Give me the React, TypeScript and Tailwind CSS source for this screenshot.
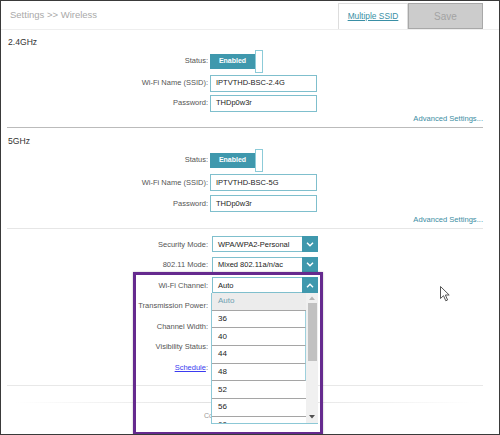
import React from "react";

const Chevron = ({ up = false }: { up?: boolean }) => (
  <svg width="8" height="5" viewBox="0 0 8 5" className="block">
    <polyline
      points={up ? "1,4.2 4,1.2 7,4.2" : "1,0.8 4,3.8 7,0.8"}
      fill="none"
      stroke="white"
      strokeWidth="1.4"
    />
  </svg>
);

const Label = ({ children }: { children: React.ReactNode }) => (
  <div className="w-[201px] shrink-0 text-right text-[7.5px] text-[#555] leading-none">{children}</div>
);

const Toggle = () => (
  <div className="flex items-center">
    <div className="w-[45px] h-[15px] bg-[#3f98ad] text-white text-[7px] font-bold flex items-center justify-center">
      Enabled
    </div>
    <div className="w-[8px] h-[23px] border border-[#8ccbd8] bg-white" />
  </div>
);

const TextInput = ({ value }: { value: string }) => (
  <div className="w-[107px] h-[17px] border border-[#7fbfcd] bg-white text-[7.5px] text-[#222] pl-[5px] flex items-center leading-none">
    {value}
  </div>
);

const Select = ({ value, up = false }: { value: string; up?: boolean }) => (
  <div className="flex w-[106px] h-[16px]">
    <div className="w-[90px] border border-r-0 border-[#7fbfcd] bg-white text-[7.5px] text-[#222] pl-[5px] flex items-center leading-none">
      {value}
    </div>
    <div className="w-[16px] bg-[#3f98ad] flex items-center justify-center">
      <Chevron up={up} />
    </div>
  </div>
);

const BandSection = ({
  title,
  ssid,
  rowH,
  lineClass,
  topClass,
}: {
  title: string;
  ssid: string;
  rowH: string;
  lineClass: string;
  topClass: string;
}) => (
  <section className={`ml-[6px] mr-[16px] border-b pb-[2px] ${lineClass}`}>
    <div className={`${topClass} h-[14px] leading-[14px] pl-[1px] text-[8.6px] text-[#333]`}>{title}</div>
    <div className="flex items-center gap-[2px] h-[24px]">
      <Label>Status:</Label>
      <Toggle />
    </div>
    <div className={`flex items-center gap-[2px] ${rowH}`}>
      <Label>Wi-Fi Name (SSID):</Label>
      <TextInput value={ssid} />
    </div>
    <div className={`flex items-center gap-[2px] ${rowH}`}>
      <Label>Password:</Label>
      <TextInput value="THDp0w3r" />
    </div>
    <div className="h-[12px] leading-[12px] text-right text-[7.6px] text-[#3d8ea3]">Advanced Settings...</div>
  </section>
);

const LowerRow = ({ label, children }: { label: React.ReactNode; children?: React.ReactNode }) => (
  <div className="flex items-center gap-[4px] h-[20.5px]">
    <Label>{label}</Label>
    {children}
  </div>
);

const options = ["Auto", "36", "40", "44", "48", "52", "56", "60"];

export default function App() {
  return (
    <div className="w-[500px] h-[435px] border border-[#3a3a3a] bg-white relative overflow-hidden font-['Liberation_Sans',Arial,sans-serif]">
      {/* header */}
      <header className="flex h-[29px] border-b border-[#eeeeee]">
        <div className="flex-1 pl-[9px] flex items-center text-[9.5px] text-[#a9a9a9]">Settings &gt;&gt; Wireless</div>
        <div className="flex pt-[2px] pr-[16px]">
          <div className="w-[70px] h-[26px] border border-b-0 border-[#dddddd] bg-white flex items-center justify-center text-[8.4px] text-[#3a8fa5] underline">
            Multiple SSID
          </div>
          <div className="w-[75px] h-[26px] bg-[#cccccc] border border-[#a8a8a8] flex items-center justify-center text-[10px] text-[#a3a3a3]">
            Save
          </div>
        </div>
      </header>

      <BandSection title="2.4GHz" ssid="IPTVTHD-BSC-2.4G" rowH="h-[20px]" lineClass="border-[#bbbbbb]" topClass="mt-[5px]" />
      <BandSection title="5GHz" ssid="IPTVTHD-BSC-5G" rowH="h-[21px]" lineClass="border-[#e6e6e6]" topClass="mt-[6px]" />

      <section className="ml-[6px] mr-[16px] pt-[5px]">
        <LowerRow label="Security Mode:">
          <Select value="WPA/WPA2-Personal" />
        </LowerRow>
        <LowerRow label="802.11 Mode:">
          <Select value="Mixed 802.11a/n/ac" />
        </LowerRow>
        <LowerRow label="Wi-Fi Channel:">
          <Select value="Auto" up />
        </LowerRow>
        <LowerRow label="Transmission Power:" />
        <LowerRow label="Channel Width:" />
        <LowerRow label="Visibility Status:" />
        <LowerRow
          label={
            <span>
              <span className="text-[#3b3bf0] underline">Schedule</span>:
            </span>
          }
        />
        <div className="mt-[7px] h-px bg-[#e8e8e8]" />
        <div className="mt-[16px] mx-[8px] h-px bg-gradient-to-r from-transparent via-[#dddddd] to-transparent" />
        <div className="mt-[9px] pl-[197px] text-[7px] text-[#999] leading-none">Copyright © D-Link Corporation.</div>
      </section>

      {/* open dropdown list */}
      <div className="absolute left-[210px] top-[292px] w-[107px] h-[131px] flex border-l border-b border-[#8cc8d6] bg-white">
        <div className="flex-1 flex flex-col overflow-hidden">
          {options.map((o, i) => (
            <div
              key={o}
              className={`shrink-0 h-[17.7px] flex items-center pl-[6px] text-[8px] leading-none border-b border-[#a5a5a5] ${
                i === 0 ? "bg-[#ececec] text-[#6ea1b1]" : "text-[#222]"
              } ${i >= 1 && i <= 4 ? "border-r-[1.5px] border-r-[#9dd0dc]" : ""}`}
            >
              {o}
            </div>
          ))}
        </div>
        <div className="w-[12px] bg-[#f0f0f0] flex flex-col">
          <div className="h-[10px] flex items-center justify-center">
            <svg width="6" height="4" viewBox="0 0 6 4">
              <polygon points="0,4 3,0.5 6,4" fill="#b5b5b5" />
            </svg>
          </div>
          <div className="mx-[1.5px] h-[58px] bg-[#c1c1c1]" />
          <div className="flex-1" />
          <div className="h-[13px] flex items-center justify-center">
            <svg width="6" height="4" viewBox="0 0 6 4">
              <polygon points="0,0 6,0 3,3.5" fill="#505050" />
            </svg>
          </div>
        </div>
      </div>

      {/* purple highlight annotation */}
      <div className="absolute left-[132px] top-[271px] w-[190px] h-[163px] border-[3px] border-[#652a8e] shadow-[0_0_2px_rgba(0,0,0,0.25)] pointer-events-none" />

      {/* mouse cursor */}
      <svg className="absolute left-[439px] top-[285px]" width="11" height="16" viewBox="0 0 11 16">
        <path
          d="M0.5 0.5 L0.5 12.5 L3.5 9.7 L5.8 14.8 L7.6 14 L5.4 9 L9.2 9 Z"
          fill="white"
          stroke="#444"
          strokeWidth="0.9"
          strokeLinejoin="round"
        />
      </svg>
    </div>
  );
}
